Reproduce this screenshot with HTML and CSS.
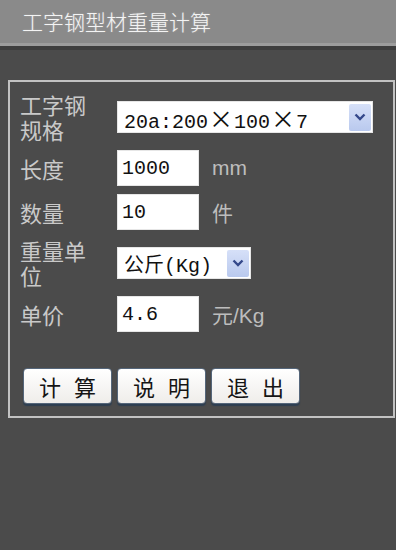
FILE: index.html
```html
<!DOCTYPE html>
<html lang="zh-CN">
<head>
    <meta charset="UTF-8">
    <meta name="viewport" content="width=device-width, initial-scale=1.0">
    <title>工字钢型材重量计算</title>
    <link rel="stylesheet" href="styles.css">
</head>
<body>

<div class="titlebar">工字钢型材重量计算</div>

<div class="panel">
    <div class="row">
        <div class="label"><span class="line">工字钢</span><span class="line">规格</span></div>
        <div class="select select-wide">
            <span class="value">20a:200<span class="x">×</span>100<span class="x">×</span>7</span>
            <span class="arrow"><svg width="12" height="8" viewBox="0 0 12 8"><path d="M1.5 1.5 L6 6 L10.5 1.5" fill="none" stroke="#34488a" stroke-width="2.4"/></svg></span>
        </div>
    </div>

    <div class="row">
        <div class="label">长度</div>
        <input class="field" type="text" value="1000">
        <span class="unit">mm</span>
    </div>

    <div class="row">
        <div class="label">数量</div>
        <input class="field" type="text" value="10">
        <span class="unit">件</span>
    </div>

    <div class="row">
        <div class="label"><span class="line">重量单</span><span class="line">位</span></div>
        <div class="select select-small">
            <span class="value">公斤(Kg)</span>
            <span class="arrow"><svg width="12" height="8" viewBox="0 0 12 8"><path d="M1.5 1.5 L6 6 L10.5 1.5" fill="none" stroke="#34488a" stroke-width="2.4"/></svg></span>
        </div>
    </div>

    <div class="row">
        <div class="label">单价</div>
        <input class="field" type="text" value="4.6">
        <span class="unit">元/Kg</span>
    </div>

    <div class="buttons">
        <button class="btn">计算</button>
        <button class="btn">说明</button>
        <button class="btn">退出</button>
    </div>
</div>

</body>
</html>
```

FILE: styles.css
```css
body {
    margin: 0;
    background-color: #4b4b4b;
    font-family: "Noto Sans CJK SC", sans-serif;
    width: 396px;
    height: 550px;
    overflow: hidden;
}
.titlebar {
    height: 43px;
    line-height: 43px;
    padding-left: 22px;
    background-color: #8a8a8a;
    color: #f4f4f4;
    font-size: 21px;
    font-weight: 300;
    border-bottom: 3px solid #9d9d9d;
    box-shadow: 0 4px 0 #3e3e3e;
    text-shadow: 0 0 2px rgba(255, 255, 255, 0.3);
}
.panel {
    margin: 34px 0 0 8px;
    width: 373px;
    padding: 10px 0 12px 10px;
    border: 2px solid #c2c2c2;
}
.row {
    display: flex;
    align-items: center;
    margin-bottom: 8px;
}
.label {
    width: 97px;
    font-size: 22px;
    line-height: 25px;
    color: #c9c9c9;
}
.line {
    display: block;
    height: 25px;
}
.field {
    box-sizing: border-box;
    width: 82px;
    height: 36px;
    margin: 0;
    padding: 0 4px;
    border: 1px solid #e6e6e6;
    background: #fff;
    font-family: "Liberation Mono", "Noto Sans CJK SC", monospace;
    font-size: 20px;
    color: #111;
}
.unit {
    margin-left: 13px;
    font-family: "Liberation Sans", "Noto Sans CJK SC", sans-serif;
    font-size: 21px;
    color: #bdbdbd;
}
.select {
    box-sizing: border-box;
    display: flex;
    align-items: center;
    justify-content: space-between;
    height: 32px;
    padding: 0 1px 0 6px;
    background: #fff;
    border: 1px solid #e6e6e6;
    font-family: "Liberation Mono", "Noto Sans CJK SC", monospace;
    font-size: 20px;
    color: #111;
}
.select-wide {
    width: 256px;
}
.select-small {
    width: 134px;
}
.x {
    display: inline-block;
    width: 26px;
    text-align: center;
    font-family: "Noto Sans CJK SC", sans-serif;
    font-size: 24px;
}
.arrow {
    display: flex;
    align-items: center;
    justify-content: center;
    width: 22px;
    height: 27px;
    background: linear-gradient(#d6e0f8, #b9c9ee);
    border-radius: 2px;
}
.buttons {
    display: flex;
    gap: 5px;
    margin-top: 36px;
    padding-left: 3px;
}
.btn {
    width: 89px;
    height: 36px;
    padding: 0 0 0 13px;
    background: linear-gradient(#ffffff, #efedea);
    border: 1px solid #55667a;
    border-radius: 4px;
    box-shadow: 0 2px 1px #2e3f52;
    font-family: "Noto Sans CJK SC", sans-serif;
    font-size: 22px;
    letter-spacing: 13px;
    color: #151515;
    cursor: pointer;
}
```
